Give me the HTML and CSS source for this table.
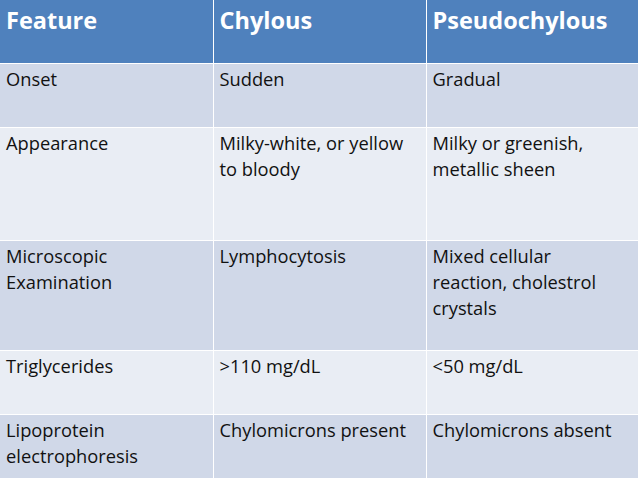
FILE: index.html
```html
<!DOCTYPE html>
<html>
<head>
<meta charset="utf-8">
<link rel="stylesheet" href="styles.css">
</head>
<body>
<table class="cmp">
  <colgroup>
    <col class="c1"><col class="c2"><col class="c3">
  </colgroup>
  <thead>
    <tr class="head"><th>Feature</th><th>Chylous</th><th>Pseudochylous</th></tr>
  </thead>
  <tbody>
    <tr class="r-onset odd"><td>Onset</td><td>Sudden</td><td>Gradual</td></tr>
    <tr class="r-app even"><td>Appearance</td><td>Milky-white, or yellow to bloody</td><td>Milky or greenish, metallic sheen</td></tr>
    <tr class="r-mic odd"><td>Microscopic Examination</td><td>Lymphocytosis</td><td>Mixed cellular reaction, cholestrol crystals</td></tr>
    <tr class="r-tri even"><td>Triglycerides</td><td>&gt;110 mg/dL</td><td>&lt;50 mg/dL</td></tr>
    <tr class="r-lip odd"><td>Lipoprotein electrophoresis</td><td>Chylomicrons present</td><td>Chylomicrons absent</td></tr>
  </tbody>
</table>
</body>
</html>
```

FILE: styles.css
```css
html, body {
  margin: 0;
  padding: 0;
  background: #ffffff;
}
.cmp {
  width: 638px;
  height: 478px;
  border-collapse: collapse;
  table-layout: fixed;
  font-family: "Open Sans", "Liberation Sans", sans-serif;
}
.c1 { width: 213px; }
.c2 { width: 213px; }
.c3 { width: 212px; }
.cmp th, .cmp td {
  text-align: left;
  vertical-align: top;
  border: 1px solid #ffffff;
  padding: 3px 8px 0 6px;
  box-sizing: border-box;
}
.cmp tr > :first-child { border-left: none; }
.cmp tr > :last-child { border-right: none; padding-right: 10px; }
.head th {
  background: #4f81bd;
  color: #ffffff;
  font-weight: 700;
  font-size: 23.5px;
  line-height: 32px;
  padding-top: 4px;
  border-top: none;
}
.cmp td {
  color: #111111;
  font-size: 18.3px;
  line-height: 26px;
  padding-top: 2px;
}
.odd td { background: #d0d8e8; }
.even td { background: #e9edf4; }
.head { height: 63px; }
.r-onset { height: 64px; }
.r-app { height: 113px; }
.r-mic { height: 110px; }
.r-tri { height: 64px; }
.r-lip { height: 64px; }
.r-lip td { border-bottom: none; }
```
